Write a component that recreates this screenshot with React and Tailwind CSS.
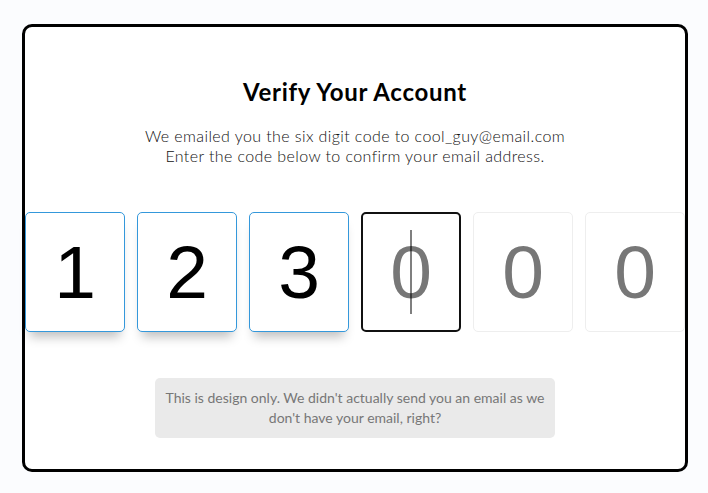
const DIGITS = [
  { value: '1', state: 'filled' },
  { value: '2', state: 'filled' },
  { value: '3', state: 'filled' },
  { value: '0', state: 'focused' },
  { value: '0', state: 'empty' },
  { value: '0', state: 'empty' },
];

function CodeBox({ value, state }) {
  const base =
    'relative flex h-[120px] w-[100px] shrink-0 items-center justify-center rounded-[5px] bg-white text-[75px] font-light leading-none';
  const look = {
    filled: 'border border-[#3498db] text-black shadow-[0_10px_10px_-5px_rgba(0,0,0,0.25)]',
    focused: 'border-2 border-[#111] text-[#777]',
    empty: 'border border-[#eee] text-[#777]',
  }[state];

  return (
    <div className={`${base} ${look}`} style={{ fontFamily: '"Liberation Sans", Arial, sans-serif' }}>
      {value}
      {state === 'focused' && (
        <span className="absolute left-1/2 top-[16px] h-[84px] w-px -translate-x-1/2 bg-black" />
      )}
    </div>
  );
}

export default function App() {
  return (
    <div
      className="min-h-screen bg-[#fbfcfe] pt-[24px] pl-[2px] flex justify-center"
      style={{ fontFamily: 'Lato, "Noto Sans", sans-serif' }}
    >
      <div className="w-[666px] h-[448px] rounded-[10px] border-[3px] border-black bg-white px-[30px] pt-[30px] text-center">
        <h2 className="mt-[20px] mb-[20px] text-[24px] font-bold leading-[29px] tracking-[0.7px] text-black">
          Verify Your Account
        </h2>
        <p className="text-[16px] font-light leading-[20px] tracking-[0.4px] text-[#111]">
          We emailed you the six digit code to cool_guy@email.com
          <br />
          Enter the code below to confirm your email address.
        </p>

        <div className="-mx-[30px] mt-[46px] mb-[46px] flex justify-center gap-[12px]">
          {DIGITS.map((d, i) => (
            <CodeBox key={i} value={d.value} state={d.state} />
          ))}
        </div>

        <div className="mx-auto w-[400px] rounded-[5px] bg-[#eaeaea] p-[10px] text-[14px] leading-[20px] text-[#777]">
          This is design only. We didn't actually send you an email as we don't have your email, right?
        </div>
      </div>
    </div>
  );
}
